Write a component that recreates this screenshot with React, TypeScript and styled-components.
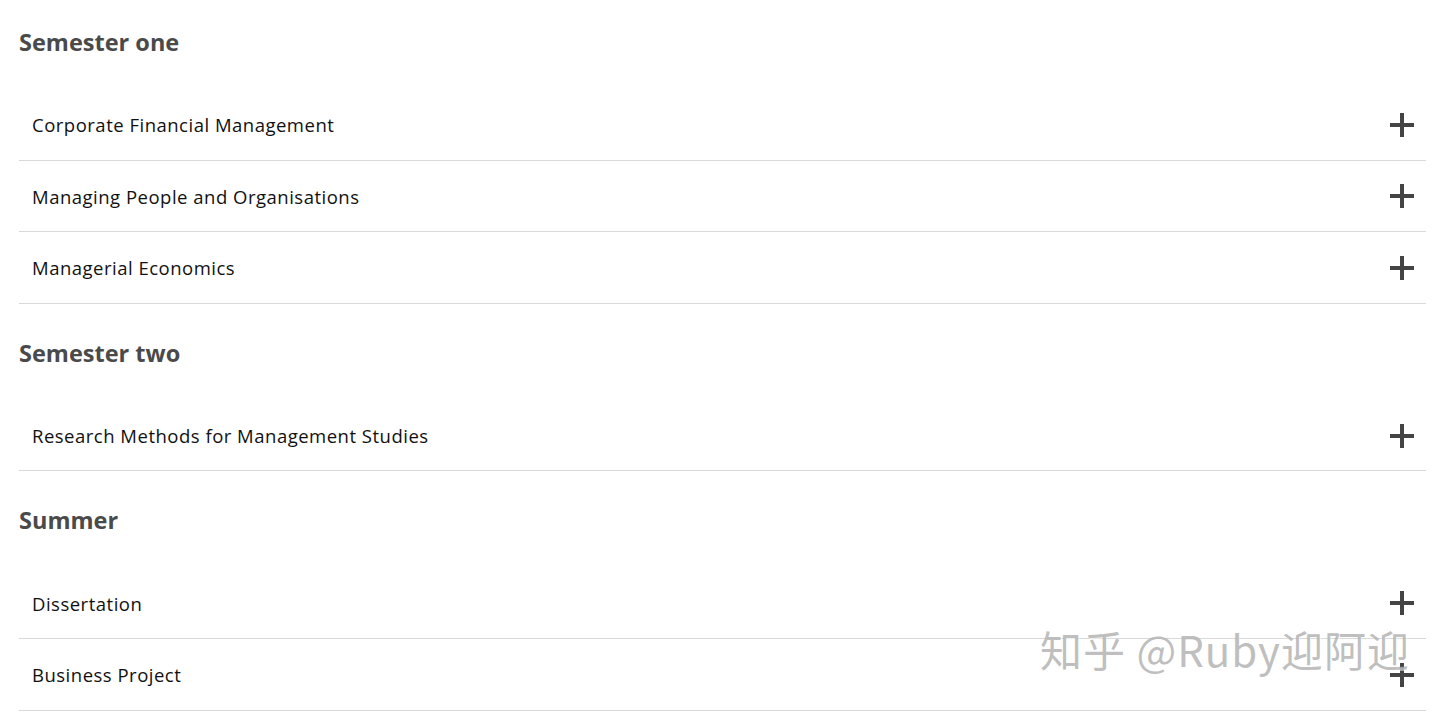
import React from 'react'
import styled, { createGlobalStyle } from 'styled-components'

const GlobalStyle = createGlobalStyle`
  html, body {
    margin: 0;
    padding: 0;
    background: #ffffff;
  }
  body {
    font-family: "Open Sans", "Noto Sans", sans-serif;
    -webkit-font-smoothing: antialiased;
  }
`

type Section = {
  title: string
  modules: string[]
}

const sections: Section[] = [
  {
    title: 'Semester one',
    modules: [
      'Corporate Financial Management',
      'Managing People and Organisations',
      'Managerial Economics',
    ],
  },
  {
    title: 'Semester two',
    modules: ['Research Methods for Management Studies'],
  },
  {
    title: 'Summer',
    modules: ['Dissertation', 'Business Project'],
  },
]

const PlusIcon = () => (
  <svg width="24" height="24" viewBox="0 0 24 24">
    <rect x="0" y="10" width="24" height="4" fill="#444" />
    <rect x="10" y="0" width="4" height="24" fill="#444" />
  </svg>
)

export default function App() {
  return (
    <Page>
      <GlobalStyle />
      {sections.map((s) => (
        <SectionBlock key={s.title}>
          <Heading>{s.title}</Heading>
          <List>
            {s.modules.map((m) => (
              <Row key={m}>
                <RowLabel>{m}</RowLabel>
                <Toggle aria-label={`Expand ${m}`}>
                  <PlusIcon />
                </Toggle>
              </Row>
            ))}
          </List>
        </SectionBlock>
      ))}
      <Watermark>知乎 @Ruby迎阿迎</Watermark>
    </Page>
  )
}

const Page = styled.div`
  position: relative;
  width: 1447px;
  height: 713px;
  overflow: hidden;
  padding: 26px 21px 0 19px;
  box-sizing: border-box;
  display: flex;
  flex-direction: column;
  gap: 33px;
`

const SectionBlock = styled.section`
  display: flex;
  flex-direction: column;
  gap: 31px;
`

const Heading = styled.h2`
  margin: 0;
  font-size: 23.5px;
  line-height: 32px;
  font-weight: 700;
  color: #4a4a4a;
`

const List = styled.div`
  display: flex;
  flex-direction: column;
`

const Row = styled.div`
  height: 71.6px;
  box-sizing: border-box;
  border-bottom: 1px solid #d9d9d9;
  padding: 1px 12px 0 13px;
  display: flex;
  align-items: center;
  justify-content: space-between;
`

const RowLabel = styled.span`
  font-size: 18.5px;
  letter-spacing: 0.5px;
  color: #111;
`

const Toggle = styled.button`
  border: 0;
  background: none;
  padding: 0;
  width: 24px;
  height: 24px;
  display: flex;
  cursor: pointer;
`

const Watermark = styled.div`
  position: absolute;
  left: 1040px;
  top: 624px;
  font-family: "Noto Sans CJK SC", "Noto Sans", sans-serif;
  font-size: 42px;
  line-height: 50px;
  letter-spacing: 1px;
  color: rgba(170, 170, 170, 0.75);
  text-shadow: 1px 1px 0 rgba(255, 255, 255, 0.6);
  white-space: nowrap;
  pointer-events: none;
`
